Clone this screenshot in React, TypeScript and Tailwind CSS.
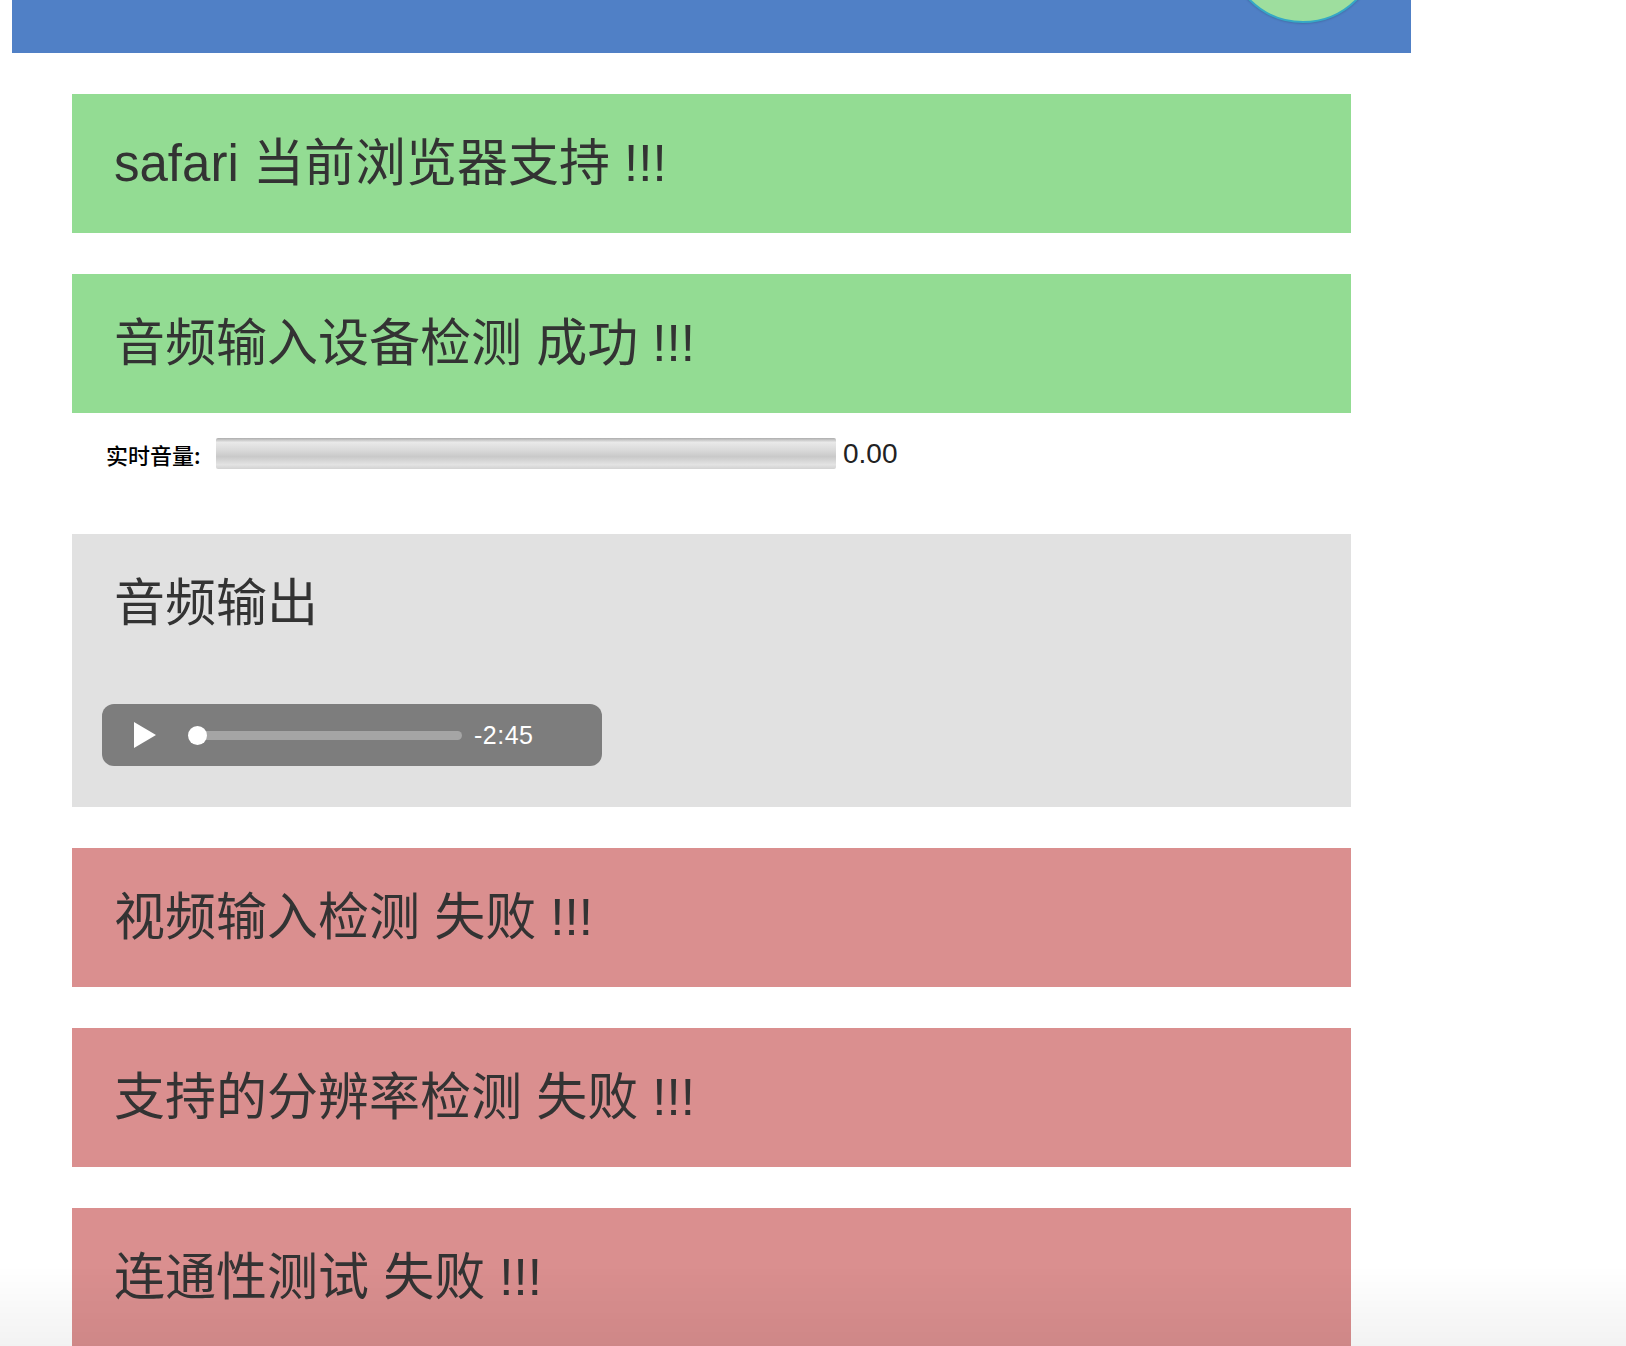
const font = "font-['Liberation_Sans','Noto_Sans_CJK_SC',sans-serif]"

type Status = 'ok' | 'fail'

function StatusBox({ text, status }: { text: string; status: Status }) {
  const bg = status === 'ok' ? 'bg-[#93dc93]' : 'bg-[#da8f8f]'
  return (
    <div className={`${bg} h-[139px] flex items-center pl-[42px] mt-[41px]`}>
      <h1 className={`${font} text-[51px] leading-[60px] text-[#333] whitespace-nowrap`}>{text}</h1>
    </div>
  )
}

function VolumeRow() {
  return (
    <div className="flex items-center pl-[34px] mt-[25px] mb-[65px] h-[31px]">
      <span className="w-[110px] text-[22px] leading-none text-black font-medium font-['Noto_Sans_CJK_SC',sans-serif]">实时音量:</span>
      <div className="w-[620px] h-[31px] rounded-[2px] bg-[linear-gradient(to_bottom,#adadad_0%,#e9e9e9_14%,#d9d9d9_40%,#c9c9c9_60%,#e3e3e3_86%,#d2d2d2_100%)]" />
      <span className="ml-[7px] text-[28px] leading-none text-[#222] font-['Liberation_Sans',sans-serif]">0.00</span>
    </div>
  )
}

function AudioPlayer() {
  return (
    <div className="w-[500px] h-[62px] rounded-[12px] bg-[#7d7d7d] flex items-center">
      <svg width="22" height="26" viewBox="0 0 22 26" className="ml-[32px]">
        <polygon points="0,0 22,13 0,26" fill="#fff" />
      </svg>
      <div className="relative ml-[41px] w-[265px] h-[9px] rounded-full bg-[#a5a5a5]">
        <div className="absolute left-[-9px] top-[-5px] w-[19px] h-[19px] rounded-full bg-white" />
      </div>
      <span className="ml-[12px] text-white text-[25px] leading-none tracking-[0.5px] font-['Liberation_Sans',sans-serif]">-2:45</span>
    </div>
  )
}

export default function App() {
  return (
    <div className="min-h-screen bg-white">
      <div className="ml-[12px] w-[1399px]">
        <div className="relative h-[53px] bg-[#5080c6]">
          <div className="absolute left-[1215px] top-[-129px] w-[152px] h-[152px] rounded-full bg-[#9ede9e] border-2 border-[#36a8c6] shadow-[0_1px_2px_rgba(0,0,0,0.15)]" />
        </div>

        <div className="mx-[60px] pt-[1px] -mt-[1px]">
          <StatusBox text="safari 当前浏览器支持 !!!" status="ok" />
          <StatusBox text="音频输入设备检测 成功 !!!" status="ok" />
          <VolumeRow />

          <div className="bg-[#e1e1e1] h-[273px] pt-[40px] pl-[30px]">
            <h2 className={`${font} text-[51px] leading-[60px] text-[#333] pl-[12px]`}>音频输出</h2>
            <div className="mt-[70px]">
              <AudioPlayer />
            </div>
          </div>

          <StatusBox text="视频输入检测 失败 !!!" status="fail" />
          <StatusBox text="支持的分辨率检测 失败 !!!" status="fail" />
          <StatusBox text="连通性测试 失败 !!!" status="fail" />
        </div>
      </div>
      <div className="fixed bottom-0 left-0 right-0 h-[80px] pointer-events-none bg-gradient-to-b from-transparent to-black/[0.05]" />
    </div>
  )
}
